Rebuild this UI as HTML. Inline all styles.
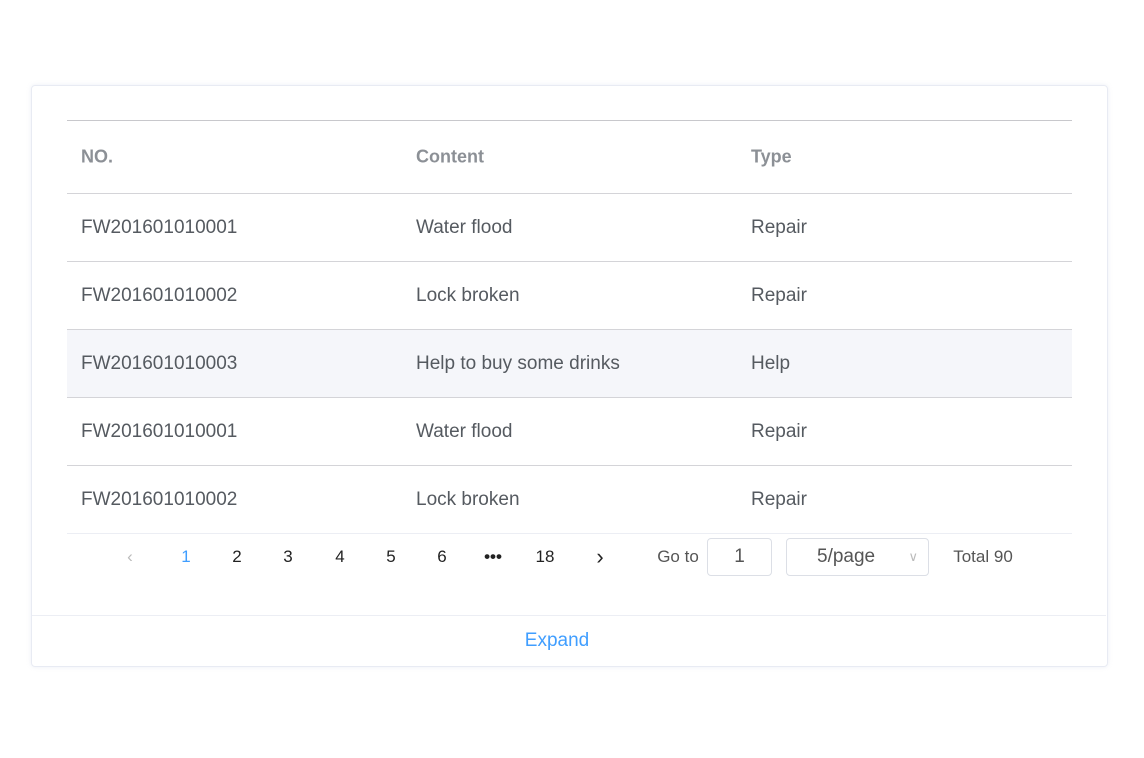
<!DOCTYPE html>
<html><head><style>
body{margin:0;width:1144px;height:758px;background:#fff;font-family:"Liberation Sans",sans-serif;position:relative;overflow:hidden}
.card{position:absolute;left:31px;top:85px;width:1075px;height:580px;border:1px solid #e8ebf3;border-radius:4px;box-shadow:0 0 4px rgba(200,205,225,.35)}
.t{position:absolute;left:67px;width:1005px}
.row{position:absolute;left:0;width:1005px;height:67px;border-bottom:1px solid #d4d4d8;font-size:19px;color:#555a60}
.row span{position:absolute;top:50%;transform:translateY(-50%)}
.c1{left:14px}.c2{left:349px}.c3{left:684px}
.h{color:#8c9096;font-weight:bold;font-size:18px}
.p{position:absolute;top:557px;transform:translate(-50%,-50%);font-size:17px;color:#222}
.box{position:absolute;top:538px;height:38px;border:1px solid #dcdfe6;border-radius:4px;box-sizing:border-box;font-size:19px;color:#555;display:flex;align-items:center;justify-content:center}
</style></head><body>
<div class="card"></div>
<div class="t" style="top:120px;border-top:1px solid #c8c8cc">
<div class="row" style="top:0;height:72px"><span class="c1 h">NO.</span><span class="c2 h">Content</span><span class="c3 h">Type</span></div>
<div class="row" style="top:73px"><span class="c1">FW201601010001</span><span class="c2">Water flood</span><span class="c3">Repair</span></div>
<div class="row" style="top:141px"><span class="c1">FW201601010002</span><span class="c2">Lock broken</span><span class="c3">Repair</span></div>
<div class="row" style="top:209px;background:#f5f6fa"><span class="c1">FW201601010003</span><span class="c2">Help to buy some drinks</span><span class="c3">Help</span></div>
<div class="row" style="top:277px"><span class="c1">FW201601010001</span><span class="c2">Water flood</span><span class="c3">Repair</span></div>
<div class="row" style="top:345px;border-bottom-color:#eceef4"><span class="c1">FW201601010002</span><span class="c2">Lock broken</span><span class="c3">Repair</span></div>
</div>
<div class="p" style="left:130px;color:#bbb">&#x2039;</div>
<div class="p" style="left:186px;color:#409eff">1</div>
<div class="p" style="left:237px">2</div>
<div class="p" style="left:288px">3</div>
<div class="p" style="left:340px">4</div>
<div class="p" style="left:391px">5</div>
<div class="p" style="left:442px">6</div>
<div class="p" style="left:493px;font-weight:bold">•••</div>
<div class="p" style="left:545px">18</div>
<div class="p" style="left:600px;font-size:22px">&#x203A;</div>
<div class="p" style="left:678px;color:#555">Go to</div>
<div class="box" style="left:707px;width:65px">1</div>
<div class="box" style="left:786px;width:143px;justify-content:flex-start;padding-left:30px">5/page<span style="position:absolute;right:10px;color:#bbb;font-size:13px">&#x2228;</span></div>
<div class="p" style="left:983px;color:#555">Total 90</div>
<div style="position:absolute;left:32px;width:1074px;top:615px;border-top:1px solid #eceef4"></div>
<div class="p" style="left:557px;top:641px;color:#409eff;font-size:19px">Expand</div>
</body></html>
